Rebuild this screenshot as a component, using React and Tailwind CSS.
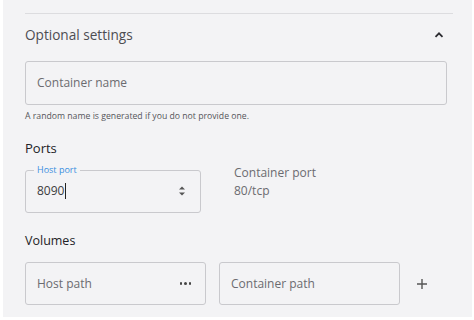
import React from "react";

export default function App() {
  return (
    <div className="w-[474px] h-[320px] bg-white overflow-hidden" style={{ fontFamily: '"Open Sans", sans-serif' }}>
      <div className="ml-[3px] mr-[2px] h-[317px] bg-[#f3f3f5] pt-[13px] pl-[22px] pr-[20px]">
        <div className="border-t border-[#dcdcdf] w-[428px]" />
        <div className="flex items-center justify-between h-[41px] pr-[2px]">
          <span className="text-[13.6px] text-[#4d4d52] leading-none">Optional settings</span>
          <svg width="12" height="12" viewBox="0 0 12 12" className="mr-[5px]">
            <path d="M2.5 7.8 L6 4.3 L9.5 7.8" fill="none" stroke="#2b2b30" strokeWidth="1.8" />
          </svg>
        </div>
        <div className="mt-[6px] w-[422px] h-[44px] border border-[#c9c9cd] rounded-[3px] flex items-center pl-[11px]">
          <span className="text-[12px] text-[#6b6b70]">Container name</span>
        </div>
        <div className="mt-[7px] text-[8.7px] text-[#55555a] leading-none">A random name is generated if you do not provide one.</div>
        <div className="mt-[21px] text-[13px] text-[#222226] leading-none">Ports</div>
        <div className="flex mt-[15px]">
          <div className="relative w-[176px] h-[43px] border border-[#c9c9cd] rounded-[3px] flex items-center pl-[11px] pr-[13px] justify-between">
            <span className="absolute -top-[7px] left-[8px] px-[3px] bg-[#f3f3f5] text-[9px] leading-[12px] text-[#3a8fe0]">Host port</span>
            <span className="text-[12px] text-[#3c3c40] flex items-center">8090<span className="inline-block w-px h-[16px] bg-[#222] ml-px" /></span>
            <svg width="10" height="14" viewBox="0 0 10 14">
              <path d="M2 5.5 L5 2.5 L8 5.5 Z" fill="#555" />
              <path d="M2 8.5 L5 11.5 L8 8.5 Z" fill="#555" />
            </svg>
          </div>
          <div className="ml-[33px] -mt-[6px] flex flex-col text-[12px] text-[#6b6b70] leading-[18px]">
            <span>Container port</span>
            <span>80/tcp</span>
          </div>
        </div>
        <div className="mt-[22px] text-[12.5px] text-[#222226] leading-none">Volumes</div>
        <div className="flex items-center mt-[15px]">
          <div className="w-[181px] h-[43px] border border-[#c9c9cd] rounded-[3px] flex items-center justify-between pl-[11px] pr-[14px]">
            <span className="text-[12px] text-[#6b6b70]">Host path</span>
            <span className="flex gap-[2px]">
              <span className="w-[2.5px] h-[2.5px] rounded-full bg-[#444]" />
              <span className="w-[2.5px] h-[2.5px] rounded-full bg-[#444]" />
              <span className="w-[2.5px] h-[2.5px] rounded-full bg-[#444]" />
            </span>
          </div>
          <div className="ml-[13px] w-[181px] h-[43px] border border-[#c9c9cd] rounded-[3px] flex items-center pl-[11px]">
            <span className="text-[12px] text-[#6b6b70]">Container path</span>
          </div>
          <svg width="12" height="12" viewBox="0 0 12 12" className="ml-[16px]">
            <path d="M6 1 V11 M1 6 H11" stroke="#555" strokeWidth="1.4" />
          </svg>
        </div>
      </div>
    </div>
  );
}
